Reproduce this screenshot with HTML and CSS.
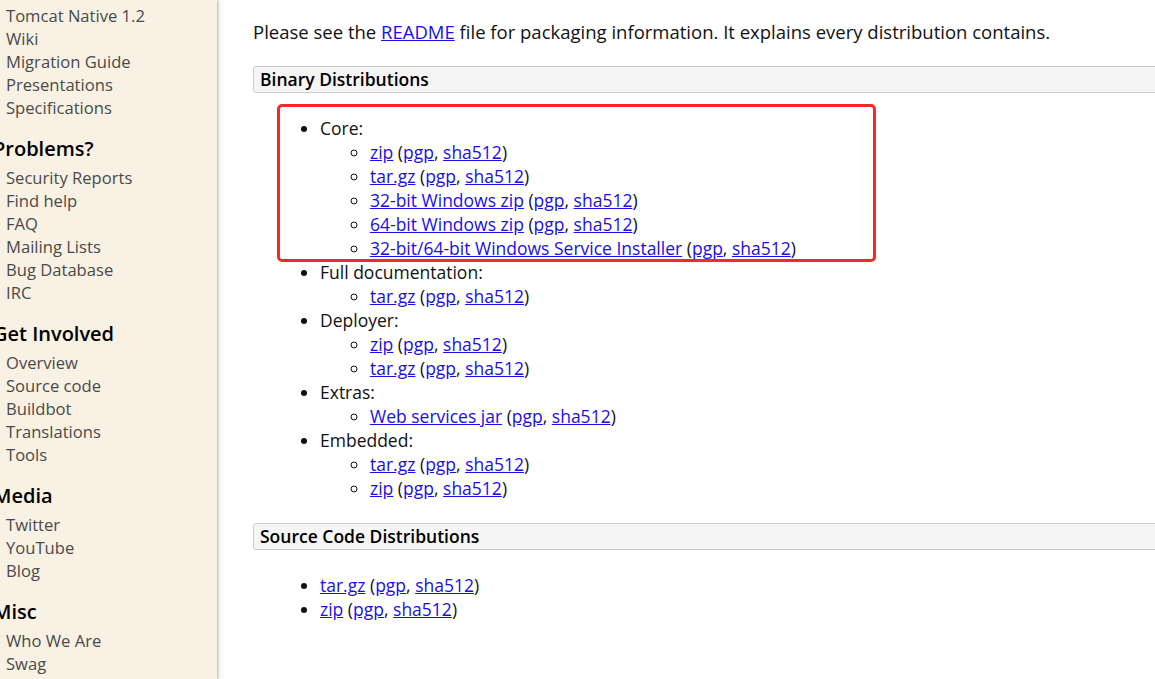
FILE: index.html
```html
<!DOCTYPE html>
<html>
<head>
<meta charset="utf-8">
<link rel="stylesheet" href="styles.css">
</head>
<body>
<div class="page">
  <nav class="sidebar">
    <ul class="nav-list">
      <li>Tomcat Native 1.2</li>
      <li>Wiki</li>
      <li>Migration Guide</li>
      <li>Presentations</li>
      <li>Specifications</li>
    </ul>
    <h2 class="nav-head">Problems?</h2>
    <ul class="nav-list">
      <li>Security Reports</li>
      <li>Find help</li>
      <li>FAQ</li>
      <li>Mailing Lists</li>
      <li>Bug Database</li>
      <li>IRC</li>
    </ul>
    <h2 class="nav-head">Get Involved</h2>
    <ul class="nav-list">
      <li>Overview</li>
      <li>Source code</li>
      <li>Buildbot</li>
      <li>Translations</li>
      <li>Tools</li>
    </ul>
    <h2 class="nav-head">Media</h2>
    <ul class="nav-list">
      <li>Twitter</li>
      <li>YouTube</li>
      <li>Blog</li>
    </ul>
    <h2 class="nav-head">Misc</h2>
    <ul class="nav-list">
      <li>Who We Are</li>
      <li>Swag</li>
    </ul>
  </nav>
  <main class="content">
    <p class="intro">Please see the <a href="#">README</a> file for packaging information. It explains every distribution contains.</p>
    <h3 class="section-head">Binary Distributions</h3>
    <ul class="dist">
      <li>Core:
        <ul class="sub">
          <li><a href="#">zip</a> (<a href="#">pgp</a>, <a href="#">sha512</a>)</li>
          <li><a href="#">tar.gz</a> (<a href="#">pgp</a>, <a href="#">sha512</a>)</li>
          <li><a href="#">32-bit Windows zip</a> (<a href="#">pgp</a>, <a href="#">sha512</a>)</li>
          <li><a href="#">64-bit Windows zip</a> (<a href="#">pgp</a>, <a href="#">sha512</a>)</li>
          <li><a href="#">32-bit/64-bit Windows Service Installer</a> (<a href="#">pgp</a>, <a href="#">sha512</a>)</li>
        </ul>
      </li>
      <li>Full documentation:
        <ul class="sub">
          <li><a href="#">tar.gz</a> (<a href="#">pgp</a>, <a href="#">sha512</a>)</li>
        </ul>
      </li>
      <li>Deployer:
        <ul class="sub">
          <li><a href="#">zip</a> (<a href="#">pgp</a>, <a href="#">sha512</a>)</li>
          <li><a href="#">tar.gz</a> (<a href="#">pgp</a>, <a href="#">sha512</a>)</li>
        </ul>
      </li>
      <li>Extras:
        <ul class="sub">
          <li><a href="#">Web services jar</a> (<a href="#">pgp</a>, <a href="#">sha512</a>)</li>
        </ul>
      </li>
      <li>Embedded:
        <ul class="sub">
          <li><a href="#">tar.gz</a> (<a href="#">pgp</a>, <a href="#">sha512</a>)</li>
          <li><a href="#">zip</a> (<a href="#">pgp</a>, <a href="#">sha512</a>)</li>
        </ul>
      </li>
    </ul>
    <h3 class="section-head">Source Code Distributions</h3>
    <ul class="dist">
      <li><a href="#">tar.gz</a> (<a href="#">pgp</a>, <a href="#">sha512</a>)</li>
      <li><a href="#">zip</a> (<a href="#">pgp</a>, <a href="#">sha512</a>)</li>
    </ul>
  </main>
</div>
<div class="highlight"></div>
</body>
</html>
```

FILE: styles.css
```css
html, body {
  margin: 0;
  padding: 0;
  overflow: hidden;
  height: 679px;
  background: #ffffff;
}

body {
  font-family: "Open Sans", "Noto Sans", sans-serif;
  color: #000;
}

.page {
  display: flex;
  height: 679px;
}

.sidebar {
  width: 217px;
  flex: 0 0 217px;
  background: #f8f1e4;
  box-shadow: 1px 0 2px #b8b8b8, 3px 0 5px rgba(0,0,0,0.08);
  padding-top: 4px;
  box-sizing: border-box;
  position: relative;
  z-index: 1;
}

.nav-list {
  list-style: none;
  margin: 0;
  padding: 0 0 0 6px;
}

.nav-list li {
  font-size: 16.6px;
  line-height: 23px;
  color: #4a4a4a;
}

.nav-head {
  margin: 16px 0 3px -7px;
  font-size: 20px;
  line-height: 28px;
  font-weight: 600;
  color: #000;
}

.content {
  flex: 1;
  padding-left: 36px;
  min-width: 0;
}

.intro {
  margin: 20px 0 22px 0;
  font-size: 18.5px;
  line-height: 24px;
  color: #111;
}

a {
  color: #1a0ee8;
  text-decoration: underline;
}

.section-head {
  margin: 0 -20px 0 0;
  font-size: 17.5px;
  line-height: 25px;
  font-weight: 600;
  color: #000;
  background: #f5f5f5;
  border: 1px solid #cccccc;
  border-radius: 3px;
  padding-left: 6px;
}

.dist {
  margin: 23px 0 23px 0;
  padding-left: 67px;
  font-size: 17.5px;
  line-height: 24px;
  color: #111;
}

.sub {
  margin: 0;
  padding-left: 50px;
  list-style-type: circle;
}

.highlight {
  position: absolute;
  left: 277px;
  top: 104px;
  width: 593px;
  height: 152px;
  border: 3px solid #ff2626;
  border-radius: 5px;
}
```
